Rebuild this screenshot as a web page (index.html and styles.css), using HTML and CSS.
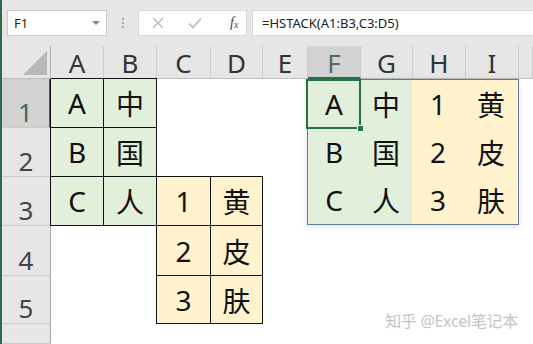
FILE: index.html
```html
<!DOCTYPE html>
<html lang="en">
<head>
    <meta charset="UTF-8">
    <title>HSTACK</title>
    <link rel="stylesheet" href="styles.css">
</head>
<body>
<div class="window">
    <!-- Formula bar -->
    <div class="toolbar">
        <div class="namebox">
            <span>F1</span>
            <span class="caret"></span>
        </div>
        <div class="grip"><i></i><i></i><i></i></div>
        <div class="fxbox">
            <svg width="12" height="12" viewBox="0 0 12 12"><path d="M1 1 L11 11 M11 1 L1 11" stroke="#b9b9b9" stroke-width="1.4" fill="none"/></svg>
            <svg width="14" height="12" viewBox="0 0 14 12"><path d="M1 6.5 L5 10.5 L13 1.5" stroke="#b9b9b9" stroke-width="1.6" fill="none"/></svg>
            <span class="fx">f<sub>x</sub></span>
        </div>
        <div class="formula">=HSTACK(A1:B3,C3:D5)</div>
    </div>

    <!-- Sheet -->
    <div class="sheet">
        <div class="corner"><span class="tri"></span></div>
        <div class="colhead">A</div>
        <div class="colhead">B</div>
        <div class="colhead">C</div>
        <div class="colhead">D</div>
        <div class="colhead">E</div>
        <div class="colhead active">F</div>
        <div class="colhead">G</div>
        <div class="colhead">H</div>
        <div class="colhead">I</div>
        <div class="colhead"></div>

        <div class="spill">
            <div class="cell green selected">A</div>
            <div class="cell green">中</div>
            <div class="cell orange">1</div>
            <div class="cell orange">黄</div>
            <div class="cell green">B</div>
            <div class="cell green">国</div>
            <div class="cell orange">2</div>
            <div class="cell orange">皮</div>
            <div class="cell green">C</div>
            <div class="cell green">人</div>
            <div class="cell orange">3</div>
            <div class="cell orange">肤</div>
        </div>

        <!-- row 1 -->
        <div class="rowhead active">1</div>
        <div class="cell green boxed">A</div>
        <div class="cell green boxed">中</div>
        <div></div><div></div><div></div>
        <div></div>
        <!-- row 2 -->
        <div class="rowhead">2</div>
        <div class="cell green boxed">B</div>
        <div class="cell green boxed">国</div>
        <div></div><div></div><div></div>
        <div></div>
        <!-- row 3 -->
        <div class="rowhead">3</div>
        <div class="cell green boxed">C</div>
        <div class="cell green boxed">人</div>
        <div class="cell orange boxed">1</div>
        <div class="cell orange boxed">黄</div>
        <div></div>
        <div></div>
        <!-- row 4 -->
        <div class="rowhead">4</div>
        <div></div><div></div>
        <div class="cell orange boxed">2</div>
        <div class="cell orange boxed">皮</div>
        <div></div><div></div><div></div><div></div><div></div><div></div>
        <!-- row 5 -->
        <div class="rowhead">5</div>
        <div></div><div></div>
        <div class="cell orange boxed">3</div>
        <div class="cell orange boxed">肤</div>
        <div></div><div></div><div></div><div></div><div></div><div></div>
        <!-- row 6 -->
        <div class="rowhead"></div>
    </div>

    <div class="watermark">知乎 @Excel笔记本</div>
</div>
</body>
</html>
```

FILE: styles.css
```css
body {
    margin: 0;
    width: 533px;
    height: 344px;
    overflow: hidden;
    background: #fff;
    font-family: "Noto Sans", "Noto Sans CJK SC", sans-serif;
    color: #111;
}

.window {
    position: relative;
    height: 344px;
    border-left: 2px solid #2f6b4b;
}

/* Formula bar */
.toolbar {
    height: 46px;
    box-sizing: border-box;
    padding-top: 10px;
    background: #e6e6e6;
    display: flex;
    align-items: flex-start;
}
.namebox {
    width: 100px;
    height: 26px;
    margin-left: 5px;
    box-sizing: border-box;
    background: #fff;
    border: 1px solid #c9c9c9;
    display: flex;
    align-items: center;
    justify-content: space-between;
    padding: 0 6px 0 6px;
    font-size: 13px;
    color: #222;
}
.caret {
    width: 0;
    height: 0;
    border-left: 4px solid transparent;
    border-right: 4px solid transparent;
    border-top: 4px solid #888;
}
.grip {
    width: 31px;
    height: 26px;
    display: flex;
    flex-direction: column;
    align-items: center;
    justify-content: center;
    gap: 2px;
}
.grip i {
    width: 2px;
    height: 2px;
    background: #a8a8a8;
}
.fxbox {
    width: 109px;
    height: 26px;
    box-sizing: border-box;
    background: #fff;
    border: 1px solid #d6d6d6;
    display: flex;
    align-items: center;
    padding-left: 13px;
    gap: 24px;
}
.fx {
    font-family: "Liberation Serif", serif;
    font-style: italic;
    font-size: 14px;
    color: #444;
    margin-left: 4px;
}
.fx sub {
    font-size: 10px;
    vertical-align: -1px;
}
.formula {
    flex: 1;
    height: 26px;
    margin-left: 5px;
    box-sizing: border-box;
    background: #fff;
    border: 1px solid #d6d6d6;
    border-right: none;
    padding-left: 9px;
    font-size: 13px;
    line-height: 24px;
    color: #222;
}

/* Sheet grid */
.sheet {
    display: grid;
    grid-template-columns: 49px 53px 53px 54px 52px 45px 53px 52px 53px 53px 1fr;
    grid-template-rows: 33px 49px 49px 49px 50px 48px 1fr;
    height: 298px;
}
.corner {
    background: #e6e6e6;
    border-right: 1px solid #b5b5b5;
    border-bottom: 1px solid #bdbdbd;
    position: relative;
}
.tri {
    position: absolute;
    right: 3px;
    bottom: 3px;
    width: 0;
    height: 0;
    border-left: 24px solid transparent;
    border-bottom: 24px solid #b8b8b8;
}
.colhead {
    background: #e6e6e6;
    border-right: 1px solid #cdcdcd;
    border-bottom: 1px solid #bdbdbd;
    font-size: 26px;
    line-height: 33px;
    padding-top: 1px;
    text-align: center;
    color: #333;
}
.colhead.active {
    background: #d2d2d2;
    color: #58695f;
    border-bottom: 2px solid #217346;
}
.rowhead {
    background: #e6e6e6;
    border-right: 1px solid #a9a9a9;
    border-bottom: 1px solid #cbcbcb;
    font-size: 26px;
    line-height: 1;
    text-align: center;
    display: flex;
    align-items: flex-end;
    justify-content: center;
    padding-bottom: 2px;
    color: #444;
}
.rowhead.active {
    background: #d2d2d2;
    color: #3d6b53;
    border-right: 2px solid #217346;
}

.cell {
    font-size: 28px;
    display: flex;
    align-items: center;
    justify-content: center;
    color: #111;
}
.green {
    background: #e2efda;
}
.orange {
    background: #fff2cc;
}
.boxed {
    border: 1px solid #111;
    margin: -1px 0 0 -1px;
}

/* Spilled HSTACK result */
.spill {
    grid-column: 7 / 11;
    grid-row: 2 / 5;
    display: grid;
    grid-template-columns: 52px 52px 52px 1fr;
    grid-template-rows: 1fr 1fr 1fr;
    border: 1px solid #6279a0;
    box-shadow: 0 2px 6px rgba(0, 0, 0, 0.12);
    margin-left: -1px;
    margin-bottom: 1px;
}
.selected {
    position: relative;
}
.selected::after {
    content: '';
    position: absolute;
    left: -2px;
    top: -1px;
    right: -1px;
    bottom: -1px;
    border: 2px solid #217346;
}
.selected::before {
    content: '';
    position: absolute;
    right: -4px;
    bottom: -4px;
    width: 5px;
    height: 5px;
    background: #217346;
    border: 1px solid #fff;
    z-index: 1;
}

.watermark {
    position: absolute;
    right: 15px;
    bottom: 12px;
    font-size: 16px;
    color: #c4c4c4;
    letter-spacing: -0.3px;
}
```
